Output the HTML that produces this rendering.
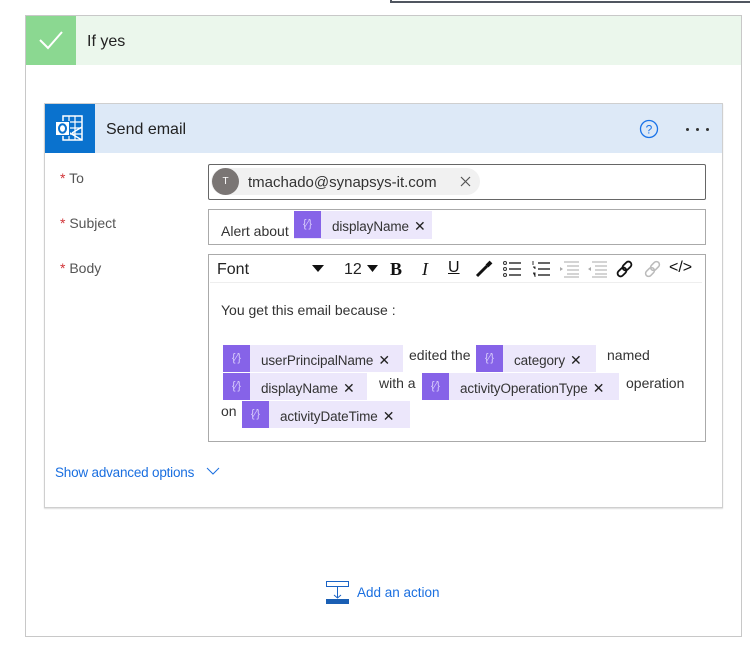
<!DOCTYPE html>
<html><head><meta charset="utf-8"><style>
*{margin:0;padding:0;box-sizing:border-box}
body{width:750px;height:648px;background:#fff;position:relative;overflow:hidden;font-family:"Liberation Sans","DejaVu Sans",sans-serif;color:#222}
.a{position:absolute}
.t{position:absolute;font-size:14px;white-space:nowrap;color:#333}
.tok{position:absolute;height:27px;background:#ece7fb;font-size:13.5px;color:#333;white-space:nowrap}
.tok .ic{position:absolute;left:0;top:0;width:27px;height:27px;background:#8663e8;color:#d8ccfb;font-size:11px;text-align:center;line-height:27px}
.tok .lb{position:absolute;left:38px;top:7px;letter-spacing:-0.1px}
.x{font-size:14px;margin-left:5px;color:#222}
</style></head><body>
<div class="a" style="left:390px;top:0;width:360px;height:3px;border-bottom:2px solid #505660;border-left:2px solid #505660"></div>
<div class="a" style="left:25px;top:15px;width:717px;height:622px;border:1px solid #c8c8c8"></div>
<div class="a" style="left:26px;top:16px;width:715px;height:49px;background:#ebf7ec"></div>
<div class="a" style="left:26px;top:16px;width:50px;height:49px;background:#8bd891"></div>
<svg class="a" style="left:38px;top:28px" width="26" height="24"><path d="M2 12 L10 20 L24 4" stroke="#fff" stroke-width="2" fill="none"/></svg>
<div class="t" style="left:87px;top:33px;font-size:16px;color:#222">If yes</div>

<div class="a" style="left:44px;top:103px;width:679px;height:405px;border:1px solid #cfcfcf;box-shadow:0 1px 1px #ddd"></div>
<div class="a" style="left:45px;top:104px;width:677px;height:49px;background:#dde9f7"></div>
<div class="a" style="left:45px;top:104px;width:50px;height:49px;background:#0a72ce"></div>
<svg class="a" style="left:54px;top:113px" width="32" height="32">
<rect x="9" y="3" width="19" height="24" fill="none" stroke="#fff" stroke-width="1.5"/>
<path d="M15 3v24M21 3v24M9 9h19M9 15h19M9 21h19" stroke="#fff" stroke-width="1.2"/>
<path d="M9 16 L28 27 M18 20 L28 14" stroke="#fff" stroke-width="1.5" fill="none"/>
<rect x="1" y="8" width="15" height="15" fill="#0a72ce"/>
<rect x="2" y="9" width="13" height="13" fill="#fff"/>
<ellipse cx="8.5" cy="15.5" rx="3.5" ry="4.2" fill="none" stroke="#0a72ce" stroke-width="2"/>
</svg>
<div class="t" style="left:106px;top:121px;font-size:16px;color:#222">Send email</div>
<svg class="a" style="left:639px;top:119px" width="20" height="20"><circle cx="10" cy="10" r="8.5" fill="none" stroke="#1a73e8" stroke-width="1.3"/><text x="10" y="14.5" font-size="12" text-anchor="middle" fill="#1a73e8" font-family="Liberation Sans">?</text></svg>
<div class="a" style="left:686px;top:128px;width:3px;height:3px;background:#333;border-radius:2px"></div>
<div class="a" style="left:696px;top:128px;width:3px;height:3px;background:#333;border-radius:2px"></div>
<div class="a" style="left:706px;top:128px;width:3px;height:3px;background:#333;border-radius:2px"></div>

<div class="t" style="left:60px;top:170px;color:#555"><span style="color:#d13438">*</span> To</div>
<div class="t" style="left:60px;top:215px;color:#555"><span style="color:#d13438">*</span> Subject</div>
<div class="t" style="left:60px;top:260px;color:#555"><span style="color:#d13438">*</span> Body</div>

<div class="a" style="left:208px;top:164px;width:498px;height:36px;border:1px solid #666;border-radius:2px"></div>
<div class="a" style="left:211px;top:168px;width:269px;height:27px;background:#f1f1f1;border-radius:14px"></div>
<div class="a" style="left:212px;top:168px;width:27px;height:27px;background:#7a7574;border-radius:50%;color:#fff;font-size:10px;text-align:center;line-height:27px">T</div>
<div class="t" style="left:248px;top:174px;font-size:15px">tmachado@synapsys-it.com</div>
<svg class="a" style="left:460px;top:176px" width="11" height="11"><path d="M1 1L10 10M10 1L1 10" stroke="#555" stroke-width="1.2"/></svg>

<div class="a" style="left:208px;top:209px;width:498px;height:36px;border:1px solid #aaa"></div>
<div class="t" style="left:221px;top:223px">Alert about</div>
<div class="tok" style="left:294px;top:211px;width:138px;height:28px"><div class="ic">{⁄}</div><div class="lb">displayName<span class="x">✕</span></div></div>

<div class="a" style="left:208px;top:254px;width:498px;height:188px;border:1px solid #aaa"></div>
<div class="a" style="left:210px;top:257px;width:492px;height:26px;border-bottom:1px solid #eee"></div>
<div class="t" style="left:217px;top:261px;font-size:16px;color:#222">Font</div>
<svg class="a" style="left:312px;top:265px" width="12" height="8"><path d="M0 0h12L6 7z" fill="#111"/></svg>
<div class="t" style="left:344px;top:261px;font-size:16px;color:#222">12</div>
<svg class="a" style="left:367px;top:265px" width="11" height="8"><path d="M0 0h11L5.5 7z" fill="#111"/></svg>
<div class="t" style="left:390px;top:259px;font-size:18px;font-weight:bold;font-family:'Liberation Serif',serif;color:#111">B</div>
<div class="t" style="left:422px;top:259px;font-size:18px;font-style:italic;font-family:'Liberation Serif',serif;color:#111">I</div>
<div class="t" style="left:448px;top:259px;font-size:16px;text-decoration:underline;color:#111">U</div>
<svg class="a" style="left:474px;top:259px" width="20" height="20"><path d="M3 17 L13 7" stroke="#111" stroke-width="3"/><path d="M13 7 L17 3" stroke="#111" stroke-width="4"/></svg>
<svg class="a" style="left:502px;top:260px" width="20" height="18"><g fill="none" stroke="#333" stroke-width="1"><circle cx="3" cy="3" r="1.5"/><circle cx="3" cy="9" r="1.5"/><circle cx="3" cy="15" r="1.5"/></g><path d="M7 3h12M7 9h12M7 15h12" stroke="#333" stroke-width="1.5"/></svg>
<svg class="a" style="left:531px;top:260px" width="20" height="18"><path d="M2 1v4M2 7h2v2M2 13h2v4" stroke="#333" stroke-width="1"/><path d="M7 3h12M7 9h12M7 15h12" stroke="#333" stroke-width="1.5"/></svg>
<svg class="a" style="left:558px;top:260px" width="22" height="18"><path d="M6 2h15M9 6h12M9 10h12M9 14h12M6 17h15" stroke="#aaa" stroke-width="1"/><path d="M2 7l3 2-3 2z" fill="#aaa"/></svg>
<svg class="a" style="left:586px;top:260px" width="22" height="18"><path d="M6 2h15M9 6h12M9 10h12M9 14h12M6 17h15" stroke="#aaa" stroke-width="1"/><path d="M5 7l-3 2 3 2z" fill="#aaa"/></svg>
<svg class="a" style="left:615px;top:259px" width="20" height="20"><g fill="none" stroke="#111" stroke-width="1.8"><rect x="9" y="2" width="6" height="10" rx="3" transform="rotate(45 12 7)"/><rect x="4" y="8" width="6" height="10" rx="3" transform="rotate(45 7 13)"/></g></svg>
<svg class="a" style="left:643px;top:259px" width="20" height="20"><g fill="none" stroke="#bbb" stroke-width="1.5"><rect x="9" y="2" width="6" height="10" rx="3" transform="rotate(45 12 7)"/><rect x="4" y="8" width="6" height="10" rx="3" transform="rotate(45 7 13)"/></g></svg>
<div class="t" style="left:669px;top:259px;font-size:16px;color:#111">&lt;/&gt;</div>

<div class="t" style="left:221px;top:302px">You get this email because :</div>
<div class="tok" style="left:223px;top:345px;width:180px"><div class="ic">{⁄}</div><div class="lb">userPrincipalName<span class="x">✕</span></div></div>
<div class="t" style="left:409px;top:347px">edited the</div>
<div class="tok" style="left:476px;top:345px;width:120px"><div class="ic">{⁄}</div><div class="lb">category<span class="x">✕</span></div></div>
<div class="t" style="left:607px;top:347px">named</div>
<div class="tok" style="left:223px;top:373px;width:144px"><div class="ic">{⁄}</div><div class="lb">displayName<span class="x">✕</span></div></div>
<div class="t" style="left:379px;top:375px">with a</div>
<div class="tok" style="left:422px;top:373px;width:197px"><div class="ic">{⁄}</div><div class="lb">activityOperationType<span class="x">✕</span></div></div>
<div class="t" style="left:626px;top:375px">operation</div>
<div class="t" style="left:221px;top:403px">on</div>
<div class="tok" style="left:242px;top:401px;width:168px"><div class="ic">{⁄}</div><div class="lb">activityDateTime<span class="x">✕</span></div></div>

<div class="t" style="left:55px;top:465px;color:#1a6fe0;font-size:13.5px;letter-spacing:-0.2px">Show advanced options</div>
<svg class="a" style="left:206px;top:467px" width="14" height="9"><path d="M1 1l6 6 6-6" stroke="#1a6fe0" fill="none"/></svg>

<svg class="a" style="left:326px;top:581px" width="24" height="24"><rect x="0.5" y="0.5" width="22" height="5" fill="none" stroke="#1a63c5"/><path d="M11.5 6v11M8 14l3.5 3 3.5-3" stroke="#1a63c5" fill="none"/><rect x="0" y="18" width="23" height="5" fill="#1a5fb4"/></svg>
<div class="t" style="left:357px;top:585px;color:#1a6fe0;font-size:13.5px">Add an action</div>
</body></html>
